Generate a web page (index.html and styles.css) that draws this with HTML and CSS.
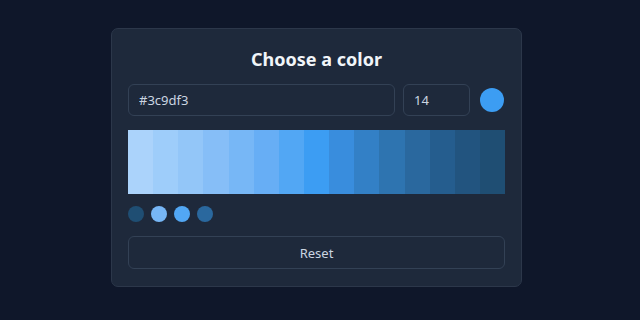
FILE: index.html
```html
<!DOCTYPE html>
<html>
<head>
<meta charset="utf-8">
<link rel="stylesheet" href="styles.css">
</head>
<body>
<div class="card">
  <h1 class="title">Choose a color</h1>
  <div class="row">
    <input class="field hex" type="text" value="#3c9df3">
    <input class="field num" type="text" value="14">
    <span class="preview"></span>
  </div>
  <div class="palette">
    <span class="sw" style="background:#abd3fb"></span>
    <span class="sw" style="background:#9ecdfa"></span>
    <span class="sw" style="background:#93c6f8"></span>
    <span class="sw" style="background:#86bef7"></span>
    <span class="sw" style="background:#77b7f6"></span>
    <span class="sw" style="background:#67aef5"></span>
    <span class="sw" style="background:#52a7f4"></span>
    <span class="sw" style="background:#3c9df3"></span>
    <span class="sw" style="background:#398ddd"></span>
    <span class="sw" style="background:#3380c6"></span>
    <span class="sw" style="background:#2e74b0"></span>
    <span class="sw" style="background:#2a689e"></span>
    <span class="sw" style="background:#255d8e"></span>
    <span class="sw" style="background:#22547f"></span>
    <span class="sw" style="background:#1f4e73"></span>
  </div>
  <div class="dots">
    <span class="dot" style="background:#1f4e73"></span>
    <span class="dot" style="background:#77b7f6"></span>
    <span class="dot" style="background:#52a7f4"></span>
    <span class="dot" style="background:#2a689e"></span>
  </div>
  <button class="reset">Reset</button>
</div>
</body>
</html>
```
FILE: styles.css
```css
html, body {
  margin: 0;
  padding: 0;
}
body {
  background: #0f172a;
  width: 640px;
  height: 320px;
  display: flex;
  justify-content: flex-start;
  align-items: flex-start;
  padding: 28px 0 0 111px;
  box-sizing: border-box;
  font-family: "Noto Sans", "Open Sans", sans-serif;
}
.card {
  width: 411px;
  box-sizing: border-box;
  background: #1e293b;
  border: 1px solid #2c374a;
  border-radius: 7px;
  padding: 16px 16px 17px;
}
.title {
  margin: 0 0 11px;
  font-size: 18px;
  line-height: 28px;
  font-weight: 700;
  color: #f1f5f9;
  text-align: center;
}
.row {
  display: flex;
  align-items: center;
  height: 32px;
}
.field {
  box-sizing: border-box;
  height: 32px;
  background: #1e293b;
  border: 1px solid #334155;
  border-radius: 6px;
  color: #cbd5e1;
  font-family: inherit;
  font-size: 13px;
  padding: 0 10px;
  outline: none;
}
.hex {
  width: 267px;
}
.num {
  width: 67px;
  margin-left: 8px;
}
.preview {
  width: 24px;
  height: 24px;
  border-radius: 50%;
  background: #3c9df3;
  margin-left: 10px;
}
.palette {
  display: flex;
  height: 64px;
  margin-top: 14px;
}
.sw {
  flex: 1;
}
.dots {
  display: flex;
  gap: 7px;
  margin-top: 12px;
}
.dot {
  width: 16px;
  height: 16px;
  border-radius: 50%;
}
.reset {
  display: block;
  width: 100%;
  height: 33px;
  margin-top: 14px;
  background: #1e293b;
  border: 1px solid #334155;
  border-radius: 6px;
  color: #cbd5e1;
  font-family: inherit;
  font-size: 13px;
}
```
